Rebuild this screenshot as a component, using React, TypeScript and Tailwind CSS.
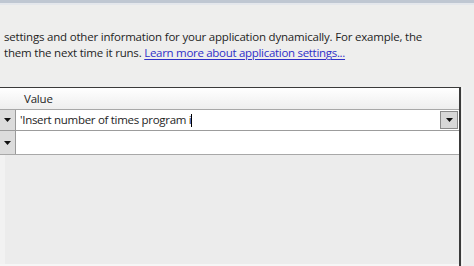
import React from "react";

const font = { fontFamily: '"Open Sans", "Noto Sans", "Liberation Sans", sans-serif' };

// small black down-pointing triangle used in the grid drop buttons
const DropArrow = () => (
  <svg width="7" height="4" viewBox="0 0 7 4" className="block">
    <path d="M0 0h7L3.5 4z" fill="#111" />
  </svg>
);

const RowButton = () => (
  <div className="w-[16px] flex items-center justify-center border-r border-[#9a9a9a] bg-[#dcdcdc]">
    <DropArrow />
  </div>
);

export default function App() {
  return (
    <div className="w-[474px] h-[266px] overflow-hidden bg-[#eeeeed] flex flex-col" style={font}>
      <div className="h-[3px] bg-[#bfc7d2]" />
      <div className="h-[2px] bg-[#e4e7ec]" />

      {/* description text */}
      <div className="pl-[4px] pt-[24px] text-[11.5px] leading-[16px] text-[#1e1e1e] tracking-[-0.2px] whitespace-nowrap">
        <div>settings and other information for your application dynamically. For example, the</div>
        <div>
          them the next time it runs.{" "}
          <span className="text-[#3030c8] underline underline-offset-2 tracking-[-0.3px]">Learn more about application settings...</span>
        </div>
      </div>

      {/* settings grid */}
      <div className="mt-[26px] flex flex-1">
        <div className="w-[461px] flex flex-col border-t border-r-2 border-[#3a3a3a] bg-[#ececec]">
          <div className="h-[22px] flex items-center pl-[24px] border-b border-[#a8a8a8] bg-gradient-to-b from-[#ffffff] to-[#eeeeee] text-[11.5px] tracking-[-0.2px] text-[#1e1e1e]">
            Value
          </div>
          <div className="h-[21px] flex border-b border-[#9c9c9c] bg-white">
            <RowButton />
            <div className="flex-1 flex items-center pl-[4px] text-[11.5px] text-[#1e1e1e] tracking-[-0.3px]">
              'Insert number of times program i<span className="inline-block w-px h-[13px] bg-black" />
            </div>
            <div className="w-[18px] flex items-center justify-center border border-[#8a8a8a] bg-[#d8d8d8] my-px mr-px">
              <DropArrow />
            </div>
          </div>
          <div className="h-[24px] flex border-b border-[#a8a8a8] bg-white">
            <RowButton />
            <div className="flex-1" />
          </div>
          <div className="flex-1 flex">
            <div className="w-[5px] bg-[#f2f2f2]" />
            <div className="flex-1" />
          </div>
          <div className="h-[2px] bg-[#f6f6f6]" />
        </div>
        <div className="flex-1 flex">
          <div className="w-px ml-px bg-[#f8f8f8]" />
          <div className="flex-1 bg-[#eeeeee]" />
        </div>
      </div>
    </div>
  );
}
